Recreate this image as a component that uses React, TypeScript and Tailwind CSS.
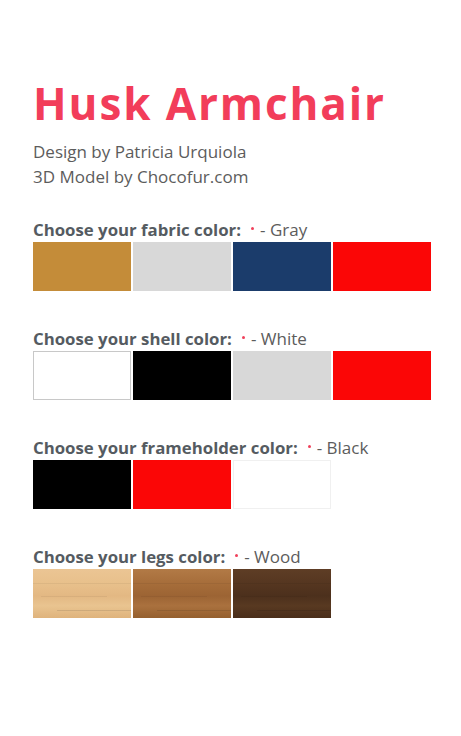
const sections = [
  { label: 'Choose your fabric color:', value: 'Gray', swatches: ['bg-[#c48c39]', 'bg-[#d8d8d8]', 'bg-[#1b3c6b]', 'bg-[#fb0606]'] },
  { label: 'Choose your shell color:', value: 'White', swatches: ['bg-white border border-[#c8c8c8]', 'bg-black', 'bg-[#d8d8d8]', 'bg-[#fb0606]'] },
  { label: 'Choose your frameholder color:', value: 'Black', swatches: ['bg-black', 'bg-[#fb0606]', 'bg-white border border-[#f0f0f0]'] },
  { label: 'Choose your legs color:', value: 'Wood', swatches: ['wood-light', 'wood-mid', 'wood-dark'] },
]

const woods: Record<string, string> = {
  'wood-light': 'bg-[linear-gradient(180deg,#ebc594_0%,#e8c08b_30%,#e3b883_55%,#e9c490_75%,#dfb37c_100%)]',
  'wood-mid': 'bg-[linear-gradient(180deg,#b27a46_0%,#a66d3a_30%,#9c6434_55%,#aa713e_75%,#95602f_100%)]',
  'wood-dark': 'bg-[linear-gradient(180deg,#5e3d25_0%,#553620_30%,#4c301c_55%,#583921_75%,#4a2e1a_100%)]',
}

function Swatch({ cls }: { cls: string }) {
  const wood = woods[cls]
  if (wood) {
    return (
      <div className={`w-[98px] h-[49px] relative overflow-hidden ${wood}`}>
        <div className="absolute left-0 right-0 top-[14px] h-px bg-black/5" />
        <div className="absolute left-2 right-6 top-[27px] h-px bg-black/5" />
        <div className="absolute left-6 right-0 top-[41px] h-px bg-black/10" />
      </div>
    )
  }
  return <div className={`w-[98px] h-[49px] box-border ${cls}`} />
}

export default function App() {
  return (
    <div className="w-[461px] h-[736px] bg-white pl-[33px] pt-[77px] font-['Open_Sans',sans-serif]">
      <h1 className="text-[#f23d5a] text-[44px] font-bold leading-[52px] tracking-[1.9px] font-['Open_Sans',sans-serif]">
        Husk Armchair
      </h1>
      <div className="mt-[10px] text-[17px] leading-[25px] text-[#5c5c5c]">
        <p>Design by Patricia Urquiola</p>
        <p>3D Model by Chocofur.com</p>
      </div>

      <div className="mt-[30px] flex flex-col gap-[37px]">
        {sections.map((s) => (
          <div key={s.label}>
            <div className="h-[22px] text-[16.8px] leading-[22px] text-[#555b61] mb-[1px] whitespace-nowrap flex items-center">
              <span className="font-bold">{s.label}</span>
              <span className="inline-block w-[3px] h-[3px] rounded-full bg-[#f0405a] ml-[10px] mr-[6px] -mt-[4px]" />
              <span className="text-[#5c5c5c] text-[17px]">- {s.value}</span>
            </div>
            <div className="flex gap-[2px]">
              {s.swatches.map((c, i) => (
                <Swatch key={i} cls={c} />
              ))}
            </div>
          </div>
        ))}
      </div>
    </div>
  )
}
